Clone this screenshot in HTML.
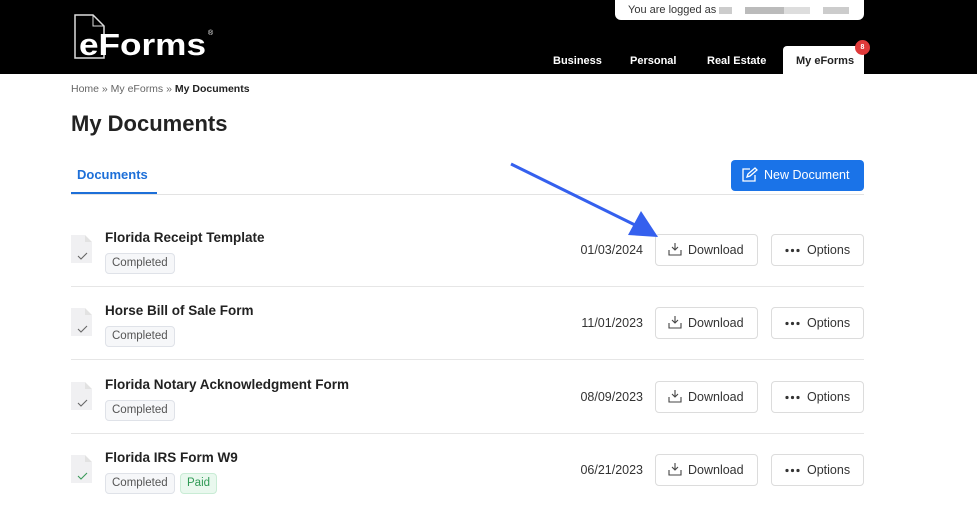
<!DOCTYPE html><html><head><style>
*{margin:0;padding:0;box-sizing:border-box}
body{width:977px;height:506px;overflow:hidden;background:#fff;font-family:"Liberation Sans",sans-serif;color:#222;position:relative}
.hdr{position:absolute;left:0;top:0;width:977px;height:74px;background:#000}
.abs{position:absolute}
.logged{left:615px;top:0;width:249px;height:20px;background:#fff;border-radius:0 0 6px 6px;font-size:11px;color:#333;padding:4px 0 0 13px}
.nav{top:55px;font-size:11px;font-weight:bold;color:#fff}
.row{position:absolute;left:71px;width:793px;height:73px;border-bottom:1px solid #e6e6e6}
.ic{position:absolute;left:0;top:21px;width:21px;height:28px;background:#f0f0f2}
.ic:after{content:"";position:absolute;right:0;top:0;border-style:solid;border-width:0 7px 7px 0;border-color:transparent #fff #e2e2e2 transparent}
.t{position:absolute;left:34px;top:16px;font-size:13.5px;font-weight:bold;color:#222}
.tag{position:absolute;top:39px;height:21px;border:1px solid #dfe2e8;background:#f6f7f9;border-radius:4px;font-size:11.5px;color:#555;padding:3px 6px}
.d{position:absolute;right:221px;top:29px;font-size:12.5px;color:#333}
.btn{position:absolute;top:20px;height:32px;border:1px solid #dcdcdc;border-radius:4px;font-size:12.5px;color:#333;padding-top:8px}
</style></head><body>
<div class="hdr"></div>
<svg class="abs" style="left:74px;top:14px" width="150" height="46">
<path d="M1 1H19L30 12V44H1Z" fill="none" stroke="#ddd" stroke-width="1.5"/>
<path d="M19 1V12H30" fill="none" stroke="#ddd" stroke-width="1"/>
<text x="5" y="41" fill="#fff" font-family="Liberation Sans" font-weight="bold" font-size="31" textLength="127" lengthAdjust="spacingAndGlyphs">eForms</text>
<text x="134" y="21" fill="#fff" font-size="7">®</text>
</svg>
<div class="abs logged">You are logged as <span style="display:inline-block;width:130px;height:7px;background:linear-gradient(90deg,#ccc 0 10%,#fff 10% 20%,#bbb 20% 50%,#ddd 50% 70%,#fff 70% 80%,#ccc 80%);vertical-align:middle"></span></div>
<div class="abs nav" style="left:553px">Business</div>
<div class="abs nav" style="left:630px">Personal</div>
<div class="abs nav" style="left:707px">Real Estate</div>
<div class="abs" style="left:783px;top:46px;width:81px;height:28px;background:#fff;border-radius:4px 4px 0 0;font-size:11px;font-weight:bold;padding:9px 0 0 13px">My eForms</div>
<div class="abs" style="left:855px;top:40px;width:15px;height:15px;border-radius:50%;background:#e03a3a;color:#fff;font-size:7px;font-weight:bold;text-align:center;line-height:15px">8</div>
<div class="abs" style="left:71px;top:83px;font-size:10.5px;color:#666">Home » My eForms » <b style="color:#222">My Documents</b></div>
<div class="abs" style="left:71px;top:111px;font-size:22px;font-weight:bold;color:#222">My Documents</div>
<div class="abs" style="left:77px;top:167px;font-size:13px;font-weight:bold;color:#1d6fd8">Documents</div>
<div class="abs" style="left:71px;top:194px;width:793px;height:1px;background:#e3e3e3"></div>
<div class="abs" style="left:71px;top:192px;width:86px;height:2px;background:#1d6fd8"></div>
<div class="abs" style="left:731px;top:160px;width:133px;height:31px;background:#1a73e8;border-radius:4px;color:#fff;font-size:12.5px;padding:8px 0 0 33px">New Document</div>
<svg class="abs" style="left:741px;top:167px" width="18" height="16"><path d="M9 2H2V14H14V8" fill="none" stroke="#fff" stroke-width="1.3"/><path d="M6 10L7 7L14 1L16 3L9 9Z" fill="none" stroke="#fff" stroke-width="1.3"/></svg>

<div id="rows"></div>
<script>
var d=[["Florida Receipt Template","01/03/2024",0],["Horse Bill of Sale Form","11/01/2023",0],["Florida Notary Acknowledgment Form","08/09/2023",0],["Florida IRS Form W9","06/21/2023",1]];
var h="";
d.forEach(function(r,i){var top=214+i*73.3;
h+='<div class="row" style="top:'+top+'px;'+(i==3?'border-bottom:none':'')+'"><div class="ic"></div><svg class="abs" style="left:6px;top:37px" width="12" height="10"><path d="M1 5L4 8L10 2" fill="none" stroke="'+(r[2]?'#3a9a5a':'#666')+'" stroke-width="1.1"/></svg><div class="t">'+r[0]+'</div><div class="tag" style="left:34px">Completed</div>'+(r[2]?'<div class="tag" style="left:109px;background:#e9f8ee;border-color:#c9ecd5;color:#2f9a55">Paid</div>':'')+'<div class="d">'+r[1]+'</div><div class="btn" style="left:584px;width:103px;padding-left:32px">Download</div><svg class="abs" style="left:597px;top:28px" width="14" height="14"><path d="M7 1V8M4 5L7 8L10 5M1 8V13H13V8" fill="none" stroke="#444" stroke-width="1.1"/></svg><div class="btn" style="left:700px;width:93px;padding-left:35px">Options</div><svg class="abs" style="left:714px;top:34px" width="16" height="5"><circle cx="2" cy="2.5" r="1.6" fill="#333"/><circle cx="7.5" cy="2.5" r="1.6" fill="#333"/><circle cx="13" cy="2.5" r="1.6" fill="#333"/></svg></div>';});
document.getElementById("rows").innerHTML=h;
</script>
<svg class="abs" style="left:0;top:0" width="977" height="506"><line x1="511" y1="164" x2="635" y2="225" stroke="#3560ee" stroke-width="3"/><path d="M658 237L628 235L641 211Z" fill="#3560ee"/></svg>
</body></html>
